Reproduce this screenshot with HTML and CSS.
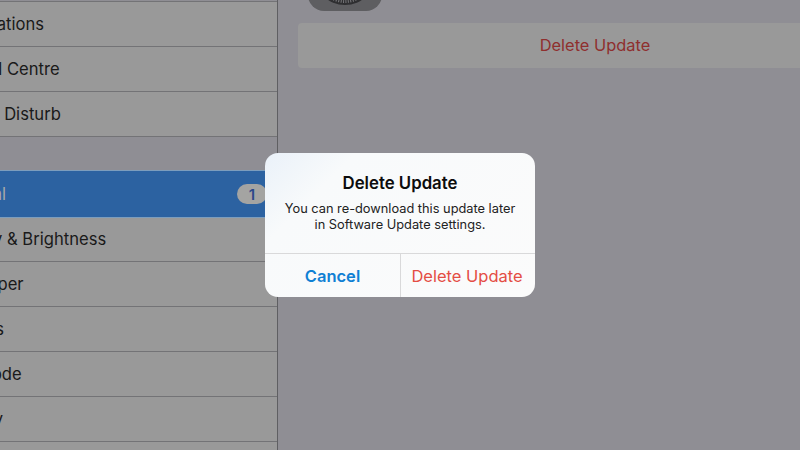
FILE: index.html
```html
<!DOCTYPE html>
<html lang="en">
<head>
<meta charset="utf-8">
<title>Delete Update</title>
<link rel="stylesheet" href="styles.css">
</head>
<body>
<div class="screen">
  <aside class="sidebar">
    <ul class="group group-first">
      <li class="row">Notifications</li>
      <li class="row">Control Centre</li>
      <li class="row">Do Not Disturb</li>
    </ul>
    <ul class="group">
      <li class="row row-active">General<span class="badge">1</span></li>
      <li class="row">Display &amp; Brightness</li>
      <li class="row">Wallpaper</li>
      <li class="row">Sounds</li>
      <li class="row">Passcode</li>
      <li class="row">Privacy</li>
      <li class="row"></li>
    </ul>
  </aside>
  <main class="detail">
    <div class="app-icon">
      <svg viewBox="0 0 74 74" width="74" height="74" aria-hidden="true">
        <rect width="74" height="74" rx="16" fill="#5e5e61"/>
        <circle cx="37" cy="37" r="31" fill="#2f2f31"/>
        <circle cx="37" cy="37" r="27" fill="none" stroke="#77777a" stroke-width="4" stroke-dasharray="1 1.4"/>
      </svg>
    </div>
    <button class="delete-row">Delete Update</button>
  </main>
  <div class="alert">
    <div class="alert-body">
      <h1 class="alert-title">Delete Update</h1>
      <p class="alert-text">You can re-download this update later<br>in Software Update settings.</p>
    </div>
    <div class="alert-actions">
      <button class="alert-btn alert-cancel">Cancel</button>
      <button class="alert-btn alert-delete">Delete Update</button>
    </div>
  </div>
</div>
</body>
</html>
```
FILE: styles.css
```css
* { box-sizing: border-box; }
html, body { margin: 0; padding: 0; }
body { width: 800px; height: 450px; overflow: hidden; font-family: Inter, "Liberation Sans", sans-serif; }
.screen { position: relative; display: flex; width: 800px; height: 450px; overflow: hidden; background: #8f8e94; }
.sidebar { flex: 0 0 278px; height: 450px; overflow: hidden; border-right: 1px solid #5f5f62; background: #8f8e94; }
.group { list-style: none; margin: 0; padding: 0; background: #999; }
.group-first { margin-top: 1px; border-top: 1px solid #737376; }
.group + .group { margin-top: 34px; }
.row { display: flex; align-items: center; justify-content: space-between; height: 45px; margin-left: -55px; padding: 0 10px 0 0; font-size: 16.6px; color: #1a1a1a; border-bottom: 1px solid #737376; }
.row-active { height: 46px; color: #a9a9aa; background: #2c62a1; border-bottom: 0; box-shadow: 0 -1px 0 #7c9dbd, 0 1px 0 #7c9dbd; }
.badge { display: flex; align-items: center; justify-content: center; width: 30px; height: 20px; border-radius: 10px; font-size: 15px; font-weight: 600; color: #2c4a8a; background: #a4a4a2; }
.detail { flex: 1; min-width: 0; padding: 0 0 0 20px; display: flex; flex-direction: column; align-items: flex-start; }
.app-icon { height: 11px; margin: 0 0 12px 10px; overflow: hidden; }
.app-icon svg { display: block; margin-top: -63px; }
.delete-row { flex: none; width: 594px; height: 45px; margin: 0; padding: 0 0 2px; border: 0; border-radius: 4px; background: #999; color: #8f2f2e; font: 400 16.4px Inter, "Liberation Sans", sans-serif; }
.alert { position: absolute; left: 265px; top: 153px; width: 270px; height: 144px; border-radius: 13px; overflow: hidden; background: linear-gradient(135deg, #eaf1f9 0%, #f8fafb 22%, #fbfbfb 100%); display: flex; flex-direction: column; }
.alert-body { height: 101px; padding-top: 20px; text-align: center; border-bottom: 1px solid #d9d9da; }
.alert-title { margin: 0 0 8px; font-size: 16.8px; line-height: 20px; font-weight: 600; color: #0c0c0c; }
.alert-text { margin: 0; font-size: 12.8px; line-height: 16px; color: #222; }
.alert-actions { flex: 1; display: flex; }
.alert-btn { flex: 1; margin: 0; padding: 0; border: 0; background: transparent; font-family: Inter, "Liberation Sans", sans-serif; font-size: 16.5px; }
.alert-cancel { flex: 0 0 136px; font-weight: 600; color: #1080d4; border-right: 1px solid #d9d9da; }
.alert-delete { padding-right: 2px; font-weight: 400; color: #e44d44; }
```
